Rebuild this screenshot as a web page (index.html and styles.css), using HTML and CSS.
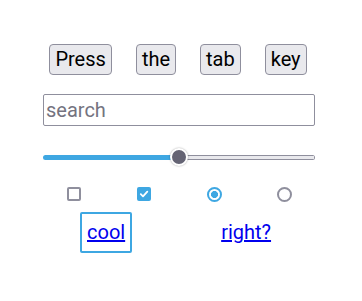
FILE: index.html
```html
<!DOCTYPE html>
<html>
<head>
<meta charset="utf-8">
<link rel="stylesheet" href="styles.css">
</head>
<body>
<div class="panel">
  <div class="buttons">
    <button class="btn">Press</button>
    <button class="btn">the</button>
    <button class="btn">tab</button>
    <button class="btn">key</button>
  </div>
  <input class="search" type="text" placeholder="search">
  <input class="range" type="range" min="0" max="100" value="50">
  <div class="checks">
    <span class="cell"><input class="box" type="checkbox"></span>
    <span class="cell"><input class="box" type="checkbox" checked></span>
    <span class="cell"><input class="radio" type="radio" name="r" checked></span>
    <span class="cell"><input class="radio" type="radio" name="r"></span>
  </div>
  <div class="links">
    <a class="link focused" href="#">cool</a>
    <a class="link" href="#">right?</a>
  </div>
</div>
</body>
</html>
```
FILE: styles.css
```css
html, body {
  margin: 0;
  padding: 0;
  background: #ffffff;
}
body {
  font-family: Roboto, "Liberation Sans", sans-serif;
  width: 362px;
  height: 301px;
  overflow: hidden;
}
.panel {
  margin-left: 43px;
  width: 272px;
  padding-top: 44px;
  display: flex;
  flex-direction: column;
}
.buttons {
  display: flex;
  justify-content: center;
  gap: 24px;
  padding-right: 2px;
}
.btn {
  font-family: Roboto, "Liberation Sans", sans-serif;
  font-size: 20px;
  line-height: 23px;
  color: #000;
  background: #e9e9ed;
  border: 1px solid #8f8f9d;
  border-radius: 4px;
  padding: 3px 5px;
  margin: 0;
  height: 31px;
}
.search {
  margin: 19px 0 0 0;
  box-sizing: border-box;
  width: 272px;
  height: 32px;
  border: 1px solid #8f8f9d;
  border-radius: 2px;
  padding: 0 2px;
  font-family: Roboto, "Liberation Sans", sans-serif;
  font-size: 20px;
  color: #000;
  outline: none;
}
.search::placeholder {
  color: #74737f;
}
.range {
  -webkit-appearance: none;
  appearance: none;
  margin: 21px 0 0 0;
  width: 272px;
  height: 20px;
  background: transparent;
}
.range::-webkit-slider-runnable-track {
  height: 5px;
  border: none;
  border-radius: 3px;
  background:
    linear-gradient(to right, #3ea7e2 0, #3ea7e2 50%, transparent 50%) 0 0 / 100% 100% no-repeat,
    linear-gradient(#e9e9ed, #e9e9ed) 1px 1px / calc(100% - 2px) 3px no-repeat,
    #8f8f9d;
}
.range::-webkit-slider-thumb {
  -webkit-appearance: none;
  width: 18px;
  height: 18px;
  margin-top: -6.5px;
  border-radius: 50%;
  background: #656474;
  border: 2px solid #fff;
  box-shadow: 0 0 2px rgba(0,0,0,0.35);
  box-sizing: border-box;
}
.checks {
  display: grid;
  grid-template-columns: repeat(4, 70px);
  margin: 18px 0 0 -4px;
  height: 18px;
  align-items: center;
}
.cell {
  display: flex;
  justify-content: center;
}
.box, .radio {
  -webkit-appearance: none;
  appearance: none;
  margin: 0;
  box-sizing: border-box;
}
.box {
  width: 14px;
  height: 14px;
  border: 2px solid #8f8f9d;
  border-radius: 2px;
}
.box:checked {
  border-color: #3ea7e2;
  background: #3ea7e2 url("data:image/svg+xml,%3Csvg xmlns='http://www.w3.org/2000/svg' viewBox='0 0 10 10'%3E%3Cpath d='M1.8 5.2 L4 7.3 L8.3 2.6' fill='none' stroke='white' stroke-width='1.8' stroke-linecap='round' stroke-linejoin='round'/%3E%3C/svg%3E") center/10px 10px no-repeat;
}
.radio {
  width: 15px;
  height: 15px;
  border: 2px solid #8f8f9d;
  border-radius: 50%;
}
.radio:checked {
  border-color: #3ea7e2;
  background: radial-gradient(circle, #3ea7e2 0, #3ea7e2 3.2px, #fff 3.8px);
}
.links {
  display: flex;
  margin-top: 9px;
  padding-left: 37px;
  gap: 82px;
  align-items: center;
}
.link {
  font-size: 20px;
  line-height: 23px;
  color: #0000ee;
  text-decoration: underline;
  padding: 7px 5px 7px 5px;
  border: 2px solid transparent;
  border-radius: 2px;
}
.link.focused {
  border-color: #3ea7e2;
}
```
